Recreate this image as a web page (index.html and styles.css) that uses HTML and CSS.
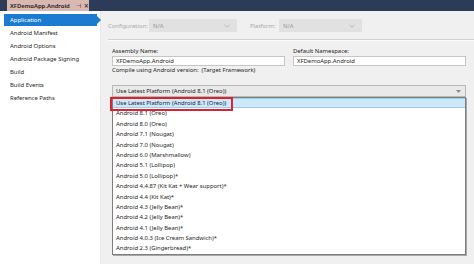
FILE: index.html
```html
<!DOCTYPE html>
<html>
<head>
<meta charset="utf-8">
<link rel="stylesheet" href="styles.css">
</head>
<body>
<div class="window">
  <header class="tabbar">
    <div class="tab">
      <span class="tab-title">XFDemoApp.Android</span>
      <span class="tab-pin">⊣</span>
      <span class="tab-close">×</span>
    </div>
  </header>
  <div class="body">
    <nav class="nav">
      <div class="nav-item active">Application</div>
      <div class="nav-item">Android Manifest</div>
      <div class="nav-item">Android Options</div>
      <div class="nav-item">Android Package Signing</div>
      <div class="nav-item">Build</div>
      <div class="nav-item">Build Events</div>
      <div class="nav-item">Reference Paths</div>
    </nav>
    <main class="main">
      <div class="config-row">
        <span class="dim-label conf">Configuration:</span>
        <div class="dim-select conf-sel"><span>N/A</span><svg class="chev" width="6" height="4" viewBox="0 0 6 4"><path d="M0.5 0.8 L3 3.2 L5.5 0.8" fill="none" stroke="#b4b4b4" stroke-width="0.9"/></svg></div>
        <span class="dim-label plat">Platform:</span>
        <div class="dim-select plat-sel"><span>N/A</span><svg class="chev" width="6" height="4" viewBox="0 0 6 4"><path d="M0.5 0.8 L3 3.2 L5.5 0.8" fill="none" stroke="#b4b4b4" stroke-width="0.9"/></svg></div>
      </div>
      <div class="sep"></div>
      <div class="form">
        <div class="fields">
          <div class="field">
            <div class="label">Assembly Name:</div>
            <div class="input">XFDemoApp.Android</div>
          </div>
          <div class="field">
            <div class="label">Default Namespace:</div>
            <div class="input">XFDemoApp.Android</div>
          </div>
        </div>
        <div class="label compile">Compile using Android version:&nbsp; (Target Framework)</div>
        <div class="combo">
          <span>Use Latest Platform (Android 8.1 (Oreo))</span>
          <svg class="combo-arrow" width="5" height="3" viewBox="0 0 5 3"><path d="M0 0 H5 L2.5 3 Z" fill="#8a8a8a"/></svg>
        </div>
        <ul class="list">
          <li class="row selected">Use Latest Platform (Android 8.1 (Oreo))<span class="callout"></span></li>
          <li class="row">Android 8.1 (Oreo)</li>
          <li class="row">Android 8.0 (Oreo)</li>
          <li class="row">Android 7.1 (Nougat)</li>
          <li class="row">Android 7.0 (Nougat)</li>
          <li class="row">Android 6.0 (Marshmallow)</li>
          <li class="row">Android 5.1 (Lollipop)</li>
          <li class="row">Android 5.0 (Lollipop)*</li>
          <li class="row">Android 4.4.87 (Kit Kat + Wear support)*</li>
          <li class="row">Android 4.4 (Kit Kat)*</li>
          <li class="row">Android 4.3 (Jelly Bean)*</li>
          <li class="row">Android 4.2 (Jelly Bean)*</li>
          <li class="row">Android 4.1 (Jelly Bean)*</li>
          <li class="row">Android 4.0.3 (Ice Cream Sandwich)*</li>
          <li class="row">Android 2.3 (Gingerbread)*</li>
        </ul>
      </div>
    </main>
  </div>
</div>
</body>
</html>
```
FILE: styles.css
```css
* { box-sizing: border-box; }
html, body {
  margin: 0;
  padding: 0;
  width: 474px;
  height: 264px;
  overflow: hidden;
  font-family: "Noto Sans", "Open Sans", sans-serif;
  font-size: 5.9px;
  color: #1e1e1e;
}
.window {
  width: 474px;
  height: 264px;
  display: flex;
  flex-direction: column;
  background: #f0f0f0;
}
.tabbar {
  height: 11px;
  background: #2b3b58;
  display: flex;
  flex: none;
}
.tab {
  margin-left: 7px;
  width: 82px;
  height: 11px;
  background: #d8b8b1;
  display: flex;
  align-items: center;
  padding-left: 3px;
  font-weight: 600;
  color: #1a1a1a;
}
.tab-title { width: 66px; }
.tab-pin { font-size: 6px; font-weight: 400; width: 8px; }
.tab-close { font-size: 8px; font-weight: 400; line-height: 8px; }

.body {
  flex: 1;
  display: flex;
}
.nav {
  width: 101px;
  flex: none;
  background: #ffffff;
  padding-top: 3px;
  border-right: 1px solid #e6e6e6;
}
.nav-item {
  height: 13px;
  line-height: 13px;
  padding-left: 10px;
  color: #1e1e1e;
}
.nav-item.active {
  position: relative;
  margin-left: 4px;
  width: 93px;
  padding-left: 6px;
  height: 12px;
  line-height: 12px;
  margin-bottom: 1px;
  background: #1a7bd0;
  color: #ffffff;
}
.nav-item.active::after {
  content: "";
  position: absolute;
  right: -4px;
  top: 2px;
  border-left: 4px solid #1a7bd0;
  border-top: 4px solid transparent;
  border-bottom: 4px solid transparent;
}

.main {
  flex: 1;
  padding-top: 8px;
  display: flex;
  flex-direction: column;
}
.config-row {
  display: flex;
  align-items: center;
  height: 13px;
  padding-left: 7px;
}
.dim-label {
  color: #a8a8a8;
}
.conf { width: 41px; }
.plat { width: 29px; margin-left: 13px; }
.dim-select {
  height: 13px;
  background: #e1e1e1;
  border: 1px solid #e1e1e1;
  display: flex;
  align-items: center;
  justify-content: space-between;
  padding: 0 6px 0 3px;
  color: #9a9a9a;
}
.conf-sel { width: 88px; }
.plat-sel { width: 83px; }
.sep {
  margin-top: 7px;
  margin-left: 7px;
  height: 2px;
  border-top: 1px solid #d2d2d2;
  border-bottom: 1px solid #fbfbfb;
}
.form {
  padding: 0 8px 0 11px;
}
.fields {
  display: flex;
  gap: 8px;
  margin-top: 6px;
}
.field { flex: 1; }
.label {
  height: 9px;
  line-height: 9px;
  color: #1e1e1e;
}
.input {
  height: 10px;
  line-height: 8px;
  background: #ffffff;
  border: 1px solid #c6c6c6;
  padding-left: 3px;
}
.compile {
  margin-top: 0;
}
.combo {
  margin-top: 10px;
  height: 12px;
  background: #e9e9e9;
  border: 1px solid #b8b8b8;
  display: flex;
  align-items: center;
  justify-content: space-between;
  padding: 0 4px 0 3px;
}
.list {
  list-style: none;
  margin: 0;
  padding: 0;
  background: #ffffff;
  border: 1px solid #7e7e7e;
  box-shadow: 1px 1px 0 #a8a8a8;
  height: 158px;
}
.row {
  height: 10.4px;
  line-height: 10.4px;
  padding-left: 3px;
  color: #1e1e1e;
}
.row.selected {
  position: relative;
  background: #cde8fb;
  border-top: 1px solid #99cdee;
  border-bottom: 1px solid #99cdee;
  line-height: 8.4px;
}
.callout {
  position: absolute;
  left: -3px;
  top: -2px;
  width: 123px;
  height: 13.5px;
  border: 2px solid #d9232e;
}
```
